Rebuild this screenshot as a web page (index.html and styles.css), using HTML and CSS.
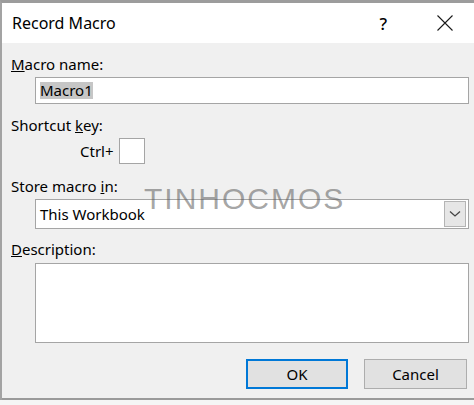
FILE: index.html
```html
<!DOCTYPE html>
<html>
<head>
<meta charset="utf-8">
<link rel="stylesheet" href="styles.css">
</head>
<body>
<div class="dialog">
  <div class="titlebar">
    <span class="title">Record Macro</span>
    <span class="help">?</span>
    <svg class="close" width="16" height="16" viewBox="0 0 16 16"><path d="M0.5 0.5 L15.5 15.5 M15.5 0.5 L0.5 15.5" stroke="#1a1a1a" stroke-width="1.1" fill="none"/></svg>
  </div>
  <div class="content">
    <div class="label first"><u>M</u>acro name:</div>
    <div class="field name"><span class="sel">Macro1</span></div>
    <div class="label shortcut">Shortcut <u>k</u>ey:</div>
    <div class="ctrlrow"><span>Ctrl+</span><div class="keybox"></div></div>
    <div class="label store">Store macro <u>i</u>n:</div>
    <div class="field select"><span class="seltext">This Workbook</span><div class="arrow"><svg width="12" height="8" viewBox="0 0 12 8"><path d="M1 1.5 L6 6 L11 1.5" stroke="#444" stroke-width="1.3" fill="none"/></svg></div></div>
    <div class="label desc"><u>D</u>escription:</div>
    <div class="field textarea"></div>
    <div class="buttons">
      <div class="btn ok">OK</div>
      <div class="btn cancel">Cancel</div>
    </div>
    <div class="watermark">TINHOCMOS</div>
  </div>
  <div class="bottom"></div>
</div>
</body>
</html>
```

FILE: styles.css
```css
html, body {
  margin: 0;
  padding: 0;
  background: #f5f5f5;
}
body {
  width: 474px;
  height: 405px;
  overflow: hidden;
  font-family: "Noto Sans", "Open Sans", sans-serif;
  font-size: 15px;
  color: #000;
}
.dialog {
  border-top: 3px solid #9c9c9c;
  border-left: 2px solid #a3a3a3;
  display: flex;
  flex-direction: column;
}
.titlebar {
  height: 40px;
  background: #fff;
  display: flex;
  align-items: center;
  padding-left: 10px;
}
.title {
  font-size: 16px;
  flex: 1;
}
.help {
  font-size: 17px;
  font-weight: 500;
  margin-right: 50px;
}
.close {
  margin-right: 21px;
}
.content {
  position: relative;
  background: #f0f0f0;
  height: 355px;
  padding: 0 5px 0 9px;
  display: flex;
  flex-direction: column;
}
.label {
  line-height: 20px;
  height: 20px;
}
.label.first { margin-top: 11px; }
.label.shortcut { margin-top: 11px; }
.label.store { margin-top: 12px; }
.label.desc { margin-top: 10px; }
.field {
  margin-left: 24px;
  background: #fff;
  border: 1px solid #a5a5a5;
  box-sizing: border-box;
}
.name {
  margin-top: 3px;
  height: 27px;
  display: flex;
  align-items: center;
  padding-left: 4px;
}
.sel {
  background: #c6c6c6;
  line-height: 17px;
}
.ctrlrow {
  margin-top: 3px;
  height: 26px;
  display: flex;
  align-items: center;
  padding-left: 69px;
}
.keybox {
  width: 26px;
  height: 26px;
  box-sizing: border-box;
  border: 1px solid #a5a5a5;
  background: #fff;
  margin-left: 5px;
}
.select {
  margin-top: 3px;
  height: 30px;
  display: flex;
  align-items: center;
  padding: 0 2px 0 4px;
}
.seltext { flex: 1; }
.arrow {
  width: 22px;
  height: 26px;
  box-sizing: border-box;
  border: 1px solid #b4b4b4;
  background: #e6e6e6;
  display: flex;
  align-items: center;
  justify-content: center;
}
.textarea {
  margin-top: 4px;
  height: 80px;
}
.buttons {
  margin-top: 16px;
  display: flex;
  justify-content: flex-end;
  gap: 16px;
  padding-right: 2px;
}
.btn {
  height: 30px;
  box-sizing: border-box;
  background: #e1e1e1;
  display: flex;
  align-items: center;
  justify-content: center;
}
.ok {
  width: 102px;
  border: 2px solid #0078d7;
}
.cancel {
  width: 103px;
  border: 1px solid #adadad;
}
.watermark {
  position: absolute;
  left: 142px;
  top: 139px;
  font-family: "Liberation Sans", Arial, sans-serif;
  font-size: 30px;
  letter-spacing: 2px;
  color: rgba(90, 90, 90, 0.55);
  pointer-events: none;
}
.bottom {
  height: 2px;
  background: #9a9a9a;
}
```
